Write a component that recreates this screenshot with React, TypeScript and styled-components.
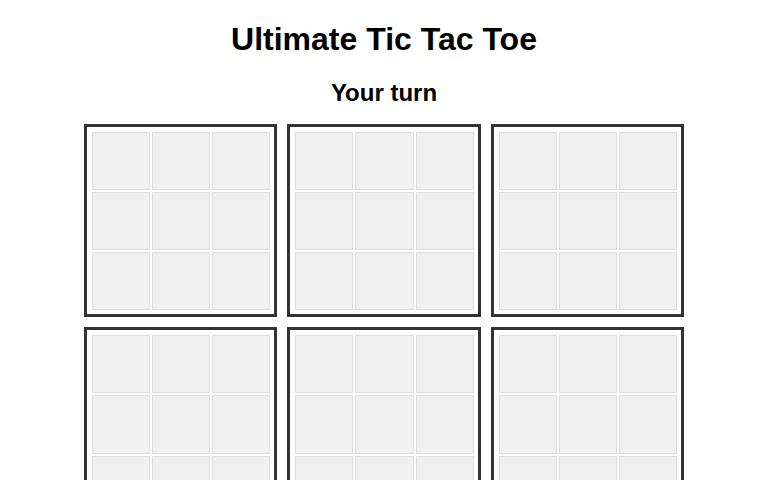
import React from "react";
import styled, { createGlobalStyle } from "styled-components";

const GlobalStyle = createGlobalStyle`
  body {
    margin: 0;
    background: #ffffff;
    font-family: "Liberation Sans", Arial, sans-serif;
    color: #000000;
  }
`;

const boards = Array.from({ length: 9 }, (_, i) => i);
const cells = Array.from({ length: 9 }, (_, i) => i);

function App() {
  return (
    <>
      <GlobalStyle />
      <Page>
        <Title>Ultimate Tic Tac Toe</Title>
        <Status>Your turn</Status>
        <BigBoard>
          {boards.map((b) => (
            <SmallBoard key={b}>
              {cells.map((c) => (
                <Cell key={c} />
              ))}
            </SmallBoard>
          ))}
        </BigBoard>
      </Page>
    </>
  );
}

export default App;

const Page = styled.div`
  display: flex;
  flex-direction: column;
  align-items: center;
`;

const Title = styled.h1`
  font-size: 32px;
  font-weight: 700;
  margin: 21px 0 21px;
`;

const Status = styled.h2`
  font-size: 24px;
  font-weight: 700;
  margin: 0 0 17px;
`;

const BigBoard = styled.div`
  width: 600px;
  display: grid;
  grid-template-columns: repeat(3, 1fr);
  gap: 10px;
`;

const SmallBoard = styled.div`
  box-sizing: border-box;
  aspect-ratio: 1;
  border: 3px solid #333333;
  background: #ffffff;
  padding: 5px 4px 4px 5px;
  display: grid;
  grid-template-columns: repeat(3, 1fr);
  grid-template-rows: repeat(3, 1fr);
  gap: 2px;
`;

const Cell = styled.div`
  box-sizing: border-box;
  border: 1px solid #dddddd;
  background: #f0f0f0;
`;
